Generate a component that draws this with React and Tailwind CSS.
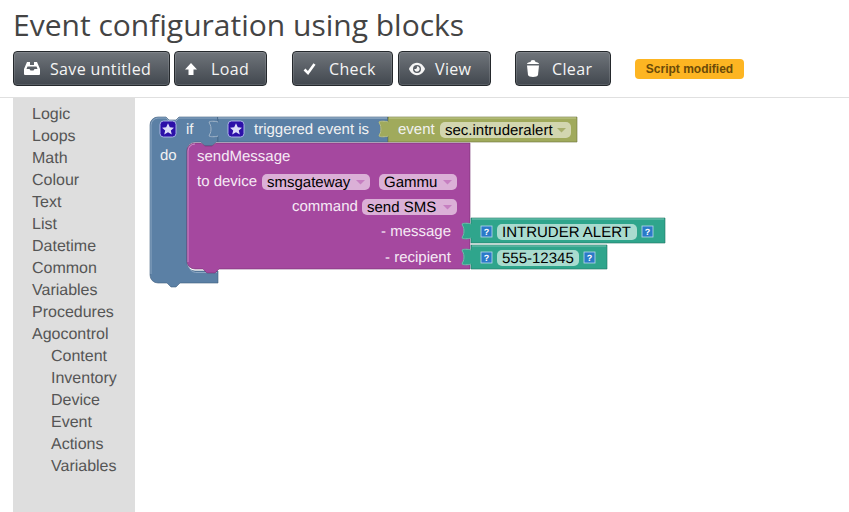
import React from "react";
import { FaEye } from "react-icons/fa6";

const menu = ["Logic", "Loops", "Math", "Colour", "Text", "List", "Datetime", "Common", "Variables", "Procedures", "Agocontrol"];
const subMenu = ["Content", "Inventory", "Device", "Event", "Actions", "Variables"];

const SaveIcon = () => (
  <svg width="16" height="13" viewBox="0 0 16 13" fill="white">
    <path fillRule="evenodd" d="M3 0h3v3h4V0h3l3 7v5a1 1 0 0 1-1 1H1a1 1 0 0 1-1-1V7zM3.500 4.500 2.500 7h3l1 1.500h3l1-1.500h3l-1-2.500z" />
  </svg>
);

const UploadIcon = () => (
  <svg width="12" height="12" viewBox="0 0 12 12" fill="white">
    <path d="M6 0l6 6.500H8.500V12h-5V6.500H0z" />
  </svg>
);

const CheckIcon = () => (
  <svg width="13" height="12" viewBox="0 0 13 12" fill="none" stroke="white" strokeWidth="2.6">
    <path d="M1.500 6.500 5 10l6.500-9" />
  </svg>
);

const TrashIcon = () => (
  <svg width="14" height="17" viewBox="0 0 14 17" fill="white">
    <path d="M4.500 2a2.500 2 0 0 1 5 0c2 .3 3.500 1 3.500 2H1c0-1 1.500-1.700 3.500-2z" />
    <path d="M1 5.500h12l-1 9.500c-.2 1.200-2.500 2-5 2s-4.800-.8-5-2z" />
  </svg>
);

const Btn = ({ icon, label, className }) => (
  <button className={`flex h-[35px] items-center rounded border border-[#24282c] bg-gradient-to-b from-[#70757b] to-[#42484f] pl-[10px] text-[16px] tracking-[0.35px] text-[#f4f4f4] shadow-[inset_0_0_0_1px_rgba(255,255,255,0.12)] ${className}`}>
    <span className="flex w-[26px] shrink-0 items-center">{icon}</span>
    <span>{label}</span>
  </button>
);

const Star = ({ x, y }) => (
  <g>
    <rect x={x} y={y} width="16" height="16" rx="3.500" fill="#2c10a8" stroke="#b4bcec" strokeWidth="0.9" />
    <path transform={`translate(${x + 8} ${y + 8.3})`} d="M0-6 1.800-2 6-1.600 2.800 1.100 3.800 5.200 0 3-3.800 5.200-2.800 1.100-6-1.600-1.800-2z" fill="#dcdcf8" />
  </g>
);

const Help = ({ x, y }) => (
  <g>
    <rect x={x} y={y} width="11" height="11" fill="#2a7ac8" stroke="#bcd8ef" strokeWidth="0.8" />
    <text x={x + 5.5} y={y + 9} textAnchor="middle" fontSize="9" fontWeight="700" fill="#fff">?</text>
  </g>
);

const Field = ({ x, y, w, fill, label, arrowFill }) => (
  <g>
    <rect x={x} y={y} width={w} height="16" rx="5" fill={fill} />
    <text x={x + 5} y={y + 13} fontSize="15" fill="#000">{label}</text>
    {arrowFill && <path d={`M${x + w - 14} ${y + 6}h9l-4.500 4.500z`} fill={arrowFill} />}
  </g>
);

// puzzle tab of a value block, going up along its left edge
const tab = "c-3 1-8 1-9 0c1-3 2-3 2-7s-1-4-2-7c1-1 6-1 9 0";

const Blocks = () => (
  <svg width="849" height="414" viewBox="0 98 849 414" className="absolute left-0 top-0" fontFamily="'Liberation Sans', sans-serif" textRendering="geometricPrecision">
    {/* if / do block */}
    <path d="M158 117h8l3 3h7l3-3H218V142h-2l-4 4h-7l-4-4H195a8 8 0 0 0-8 8V263a8 8 0 0 0 8 8H218V283H180l-4 4h-5l-4-4H158a8 8 0 0 1-8-8V125a8 8 0 0 1 8-8z" fill="#5b80a5" stroke="#3f5e7e" strokeWidth="0.6" />
    <path d="M151 274V125a8 8 0 0 1 7-7h8l3 3h7l3-3h38M188.500 263a8 8 0 0 0 7 9.500H217" fill="none" stroke="#8ba6c2" strokeWidth="1" />
    <Star x={160} y={121} />
    <text x={186} y={134} fontSize="15" fill="#f2f2f2">if</text>
    <text x={160} y={160} fontSize="15" fill="#f2f2f2">do</text>

    {/* triggered event is */}
    <path d={`M218 117H388V142H218V136${tab}V117z`} fill="#5b80a5" stroke="#3f5e7e" strokeWidth="0.6" />
    <path d={`M218 118H387M218 136${tab}`} fill="none" stroke="#a9bdd1" strokeWidth="1" />
    <Star x={228} y={121} />
    <text x={254} y={134} fontSize="15" fill="#f2f2f2">triggered event is</text>

    {/* event */}
    <path d={`M388 117H577V142H388V136${tab}V117z`} fill="#a0aa5c" stroke="#6c733d" strokeWidth="0.6" />
    <path d={`M389 118H576M388 136${tab}`} fill="none" stroke="#c2c98e" strokeWidth="1" />
    <text x={398} y={134} fontSize="15" fill="#f2f2f2">event</text>
    <Field x={440} y={122} w={131} fill="#d2d6b0" label="sec.intruderalert" arrowFill="#a8af6d" />

    {/* sendMessage */}
    <path d="M195 143h6l4 3h7l4-3H470V269H219l-4 4h-8l-4-4h-8a8 8 0 0 1-8-8V151a8 8 0 0 1 8-8z" fill="#a5489f" stroke="#73306e" strokeWidth="0.6" />
    <path d="M188 262V151a7 7 0 0 1 7-7" fill="none" stroke="#cc8fc8" strokeWidth="1" />
    <text x={197} y={161} fontSize="15" fill="#f6eaf5">sendMessage</text>
    <text x={197} y={186} fontSize="15" fill="#f6eaf5">to device</text>
    <Field x={262} y={174} w={108} fill="#dbb0d7" label="smsgateway" arrowFill="#c67fc1" />
    <Field x={379} y={174} w={78} fill="#dbb0d7" label="Gammu" arrowFill="#c67fc1" />
    <text x={292} y={211} fontSize="15" fill="#f6eaf5">command</text>
    <Field x={362} y={199} w={95} fill="#dbb0d7" label="send SMS" arrowFill="#c67fc1" />
    <text x={381} y={236} fontSize="15" fill="#f6eaf5">- message</text>
    <text x={385} y={262} fontSize="15" fill="#f6eaf5">- recipient</text>

    {/* message */}
    <path d={`M471 218H665V243H471V238${tab}V218z`} fill="#2fa58c" stroke="#1f7361" strokeWidth="0.6" />
    <path d={`M472 219H664M471 238${tab}`} fill="none" stroke="#78c4b3" strokeWidth="1" />
    <Help x={481} y={226} />
    <Field x={497} y={224} w={140} fill="#a9dbcf" label="INTRUDER ALERT" />
    <Help x={642} y={226} />

    {/* recipient */}
    <path d={`M471 245H607V269H471V264${tab}V245z`} fill="#2fa58c" stroke="#1f7361" strokeWidth="0.6" />
    <path d={`M472 246H606M471 264${tab}`} fill="none" stroke="#78c4b3" strokeWidth="1" />
    <Help x={481} y={252} />
    <Field x={497} y={250} w={82} fill="#a9dbcf" label="555-12345" />
    <Help x={584} y={252} />
  </svg>
);

export default function App() {
  return (
    <div className="relative h-[512px] w-[849px] overflow-hidden bg-white font-['Open_Sans',sans-serif]">
      <h1 className="pl-[13px] pt-[6px] text-[30px] leading-[38px] text-[#444]">Event configuration using blocks</h1>
      <div className="mt-[7px] flex items-center pl-[13px]">
        <Btn className="w-[157px]" icon={<SaveIcon />} label="Save untitled" />
        <Btn className="ml-1 w-[93px]" icon={<UploadIcon />} label="Load" />
        <Btn className="ml-[25px] w-[101px]" icon={<CheckIcon />} label="Check" />
        <Btn className="ml-[5px] w-[93px]" icon={<FaEye className="text-[16px]" />} label="View" />
        <Btn className="ml-[24px] w-[96px]" icon={<TrashIcon />} label="Clear" />
        <span className="ml-6 flex h-5 w-[109px] items-center justify-center rounded-sm bg-[#fdb522] font-['Liberation_Sans',sans-serif] text-[12px] font-bold text-[#6b4a08]">Script modified</span>
      </div>
      <div className="mt-[11px] border-t border-[#e0e0e0]" />
      <div className="relative flex">
        <ul className="ml-[13px] h-[414px] w-[122px] bg-[#dedede] pt-[6px] font-['Liberation_Sans',sans-serif] text-[16px] leading-[22px] text-[#555] [text-rendering:geometricPrecision]">
          {menu.map((m) => (
            <li key={m} className="pl-[19px]">{m}</li>
          ))}
          {subMenu.map((m) => (
            <li key={m} className="pl-[38px]">{m}</li>
          ))}
        </ul>
        <Blocks />
      </div>
    </div>
  );
}
